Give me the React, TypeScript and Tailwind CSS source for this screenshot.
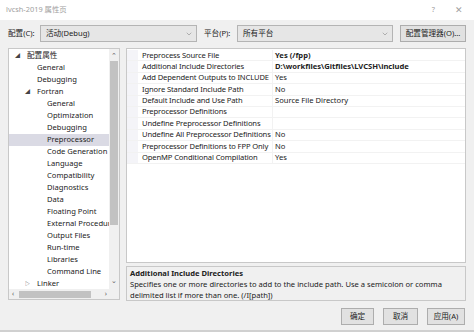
import { ChevronDown } from 'lucide-react';

const font = { fontFamily: '"Noto Sans", "Noto Sans CJK SC", sans-serif' };

type Node = { label: string; level: number; arrow?: 'open' | 'closed'; selected?: boolean };

const tree: Node[] = [
  { label: '配置属性', level: 0, arrow: 'open' },
  { label: 'General', level: 1 },
  { label: 'Debugging', level: 1 },
  { label: 'Fortran', level: 1, arrow: 'open' },
  { label: 'General', level: 2 },
  { label: 'Optimization', level: 2 },
  { label: 'Debugging', level: 2 },
  { label: 'Preprocessor', level: 2, selected: true },
  { label: 'Code Generation', level: 2 },
  { label: 'Language', level: 2 },
  { label: 'Compatibility', level: 2 },
  { label: 'Diagnostics', level: 2 },
  { label: 'Data', level: 2 },
  { label: 'Floating Point', level: 2 },
  { label: 'External Procedures', level: 2 },
  { label: 'Output Files', level: 2 },
  { label: 'Run-time', level: 2 },
  { label: 'Libraries', level: 2 },
  { label: 'Command Line', level: 2 },
  { label: 'Linker', level: 1, arrow: 'closed' },
];

const props: { name: string; value: string; bold?: boolean }[] = [
  { name: 'Preprocess Source File', value: 'Yes (/fpp)', bold: true },
  { name: 'Additional Include Directories', value: 'D:\\workfiles\\Gitfiles\\LVCSH\\include', bold: true },
  { name: 'Add Dependent Outputs to INCLUDE', value: 'Yes' },
  { name: 'Ignore Standard Include Path', value: 'No' },
  { name: 'Default Include and Use Path', value: 'Source File Directory' },
  { name: 'Preprocessor Definitions', value: '' },
  { name: 'Undefine Preprocessor Definitions', value: '' },
  { name: 'Undefine All Preprocessor Definitions', value: 'No' },
  { name: 'Preprocessor Definitions to FPP Only', value: 'No' },
  { name: 'OpenMP Conditional Compilation', value: 'Yes' },
];

function Combo({ text, width }: { text: string; width: string }) {
  return (
    <div className={`${width} h-[17px] flex items-center justify-between bg-[#e6e6e6] border border-[#b4b4b4] pl-[5px] pr-[3px]`}>
      <span className="text-[7.6px] text-[#222]">{text}</span>
      <ChevronDown className="w-[8px] h-[8px] text-[#777]" strokeWidth={1.5} />
    </div>
  );
}

function Btn({ children, width }: { children: React.ReactNode; width: string }) {
  return (
    <div className={`${width} h-[17px] flex items-center justify-center bg-[#e1e1e1] border border-[#adadad] text-[7.6px] text-[#222] whitespace-nowrap`}>
      {children}
    </div>
  );
}

export default function App() {
  return (
    <div className="w-[474px] h-[332px] bg-[#f0f0f0] flex flex-col overflow-hidden" style={font}>
      <div className="h-[20px] bg-white flex items-center justify-between pl-[6px] pr-[11px] text-[7.4px] text-[#a0a0a0]">
        <span>lvcsh-2019 属性页</span>
        <div className="flex items-center gap-[20px]">
          <span>?</span>
          <span className="text-[9px]">✕</span>
        </div>
      </div>

      <div className="mt-[5px] h-[17px] flex items-center pl-[8px]">
        <span className="w-[32px] text-[7.6px] text-[#222] whitespace-nowrap">配置(C):</span>
        <Combo text="活动(Debug)" width="w-[157px]" />
        <span className="ml-[7px] w-[33px] text-[7.6px] text-[#222] whitespace-nowrap">平台(P):</span>
        <Combo text="所有平台" width="w-[156px]" />
        <div className="ml-[7px]">
          <Btn width="w-[66px]">配置管理器(O)...</Btn>
        </div>
      </div>

      <div className="mt-[6px] flex pl-[8px] gap-[6px]">
        {/* tree */}
        <div className="w-[112px] h-[252px] bg-white border border-[#c8c8c8] flex flex-col">
          <div className="flex flex-1 min-h-0">
            <div className="flex-1 min-w-0 pt-[1px] overflow-hidden">
              {tree.map((n, i) => (
                <div
                  key={i}
                  className={`h-[12px] flex items-center text-[7.6px] text-[#222] whitespace-nowrap ${n.selected ? 'bg-[#dadae4]' : ''}`}
                  style={{ paddingLeft: 6 + n.level * 10 }}
                >
                  <span className="w-[12px] shrink-0 text-[5px] text-[#444] flex items-center">
                    {n.arrow === 'open' ? '◢' : n.arrow === 'closed' ? '▷' : ''}
                  </span>
                  <span>{n.label}</span>
                </div>
              ))}
            </div>
            <div className="w-[10px] bg-[#f0f0f0] flex flex-col items-center">
              <span className="h-[12px] text-[7px] text-[#606060] leading-[14px]">⌃</span>
              <div className="w-[8px] h-[164px] bg-[#c2c2c2]" />
              <div className="flex-1" />
              <span className="h-[12px] text-[7px] text-[#606060] leading-[8px]">⌄</span>
            </div>
          </div>
          <div className="h-[10px] bg-[#f0f0f0] flex items-center pl-[3px] pr-[12px] text-[7px] text-[#606060]">
            <span>‹</span>
            <div className="ml-[5px] w-[72px] h-[7px] bg-[#c2c2c2]" />
            <div className="flex-1" />
            <span>›</span>
          </div>
        </div>

        {/* right side */}
        <div className="w-[340px] flex flex-col">
          <div className="h-[215px] bg-white border border-[#c8c8c8] pt-[1px]">
            {props.map((p, i) => (
              <div key={i} className="h-[11.4px] flex border-b border-[#f2f2f2] text-[7.6px] text-[#222]">
                <div className="w-[11px] shrink-0 bg-[#f4f4f8]" />
                <div className="w-[135px] shrink-0 pl-[4px] flex items-center whitespace-nowrap overflow-hidden border-r border-[#f2f2f2] tracking-[-0.12px]">
                  {p.name}
                </div>
                <div className={`pl-[2px] flex items-center whitespace-nowrap ${p.bold ? 'font-bold' : ''}`}>{p.value}</div>
              </div>
            ))}
          </div>
          <div className="mt-[3px] h-[35px] bg-[#f0f0f0] border border-[#c8c8c8] px-[3px] pt-[1px] text-[7.6px] text-[#222] leading-[11px]">
            <div className="font-bold">Additional Include Directories</div>
            <div className="pr-[20px]">Specifies one or more directories to add to the include path. Use a semicolon or comma delimited list if more than one. (/I[path])</div>
          </div>
        </div>
      </div>

      <div className="mt-[7px] flex justify-end gap-[9px] pr-[9px]">
        <Btn width="w-[33px]">确定</Btn>
        <Btn width="w-[35px]">取消</Btn>
        <Btn width="w-[38px]">应用(A)</Btn>
      </div>
      <div className="flex-1" />
      <div className="h-[2px] bg-[#d0d0d0]" />
    </div>
  );
}
